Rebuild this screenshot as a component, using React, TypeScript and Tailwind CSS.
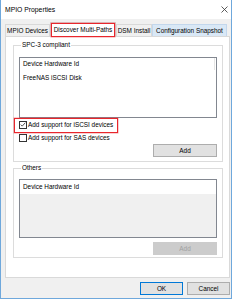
import React from "react";

function Tab({ label, w, selected, hover }: { label: string; w: string; selected?: boolean; hover?: boolean }) {
  if (selected) {
    return (
      <div className={`relative z-10 -mb-[1px] flex h-[15px] items-center justify-center bg-white border-x border-t border-[#d9d9d9] ${w}`}>
        <span className="whitespace-nowrap">{label}</span>
        <div className="absolute inset-0 border border-[#e8262c] shadow-[0_0_0_0.5px_rgba(232,38,44,0.45)]" />
      </div>
    );
  }
  return (
    <div
      className={`flex h-[12px] items-center justify-center border-t border-r border-l ${
        hover ? "bg-[#d9e8f6] border-[#c3d7ec]" : "bg-[#f0f0f0] border-[#d9d9d9]"
      } ${w}`}
    >
      <span className="whitespace-nowrap">{label}</span>
    </div>
  );
}

function CheckRow({ label, checked }: { label: string; checked?: boolean }) {
  return (
    <div className="flex h-[13px] items-center gap-[1px]">
      <div className="flex h-[8px] w-[8px] items-center justify-center border border-[#333] bg-white">
        {checked && (
          <svg width="7" height="7" viewBox="0 0 7 7">
            <path d="M0.8 3.6 L2.6 5.4 L6.2 1.4" fill="none" stroke="#222" strokeWidth="0.9" />
          </svg>
        )}
      </div>
      <span className="whitespace-nowrap">{label}</span>
    </div>
  );
}

export default function App() {
  return (
    <div className="w-[235px] h-[300px] bg-white font-['Liberation_Sans',Arial,sans-serif] text-[6.4px] leading-[8px] text-black">
      <div className="flex h-[299px] w-[232px] flex-col border-x border-b border-[#6fa8dc] bg-[#f0f0f0]">
        {/* title bar */}
        <div className="flex h-[19px] items-center justify-between bg-white pl-[4px] pr-[3px]">
          <span className="text-[6.8px]">MPIO Properties</span>
          <svg width="7" height="7" viewBox="0 0 7 7">
            <path d="M0.5 0.5 L6.5 6.5 M6.5 0.5 L0.5 6.5" stroke="#333" strokeWidth="0.8" />
          </svg>
        </div>
        {/* body */}
        <div className="flex flex-col pl-[4px] pr-[1px]">
          <div className="mt-[3px] flex h-[14px] items-end">
            <Tab label="MPIO Devices" w="w-[45px]" />
            <Tab label="Discover Multi-Paths" w="w-[66px]" selected />
            <Tab label="DSM Install" w="w-[36px]" />
            <Tab label="Configuration Snapshot" w="w-[75px]" hover />
          </div>
          <div className="flex h-[242px] flex-col border border-[#d9d9d9] bg-white pl-[7px] pr-[6px] pt-[4px]">
            {/* SPC-3 group */}
            <fieldset className="flex flex-col border border-[#dcdcdc] px-[5px] pt-[8px] pb-[4px] min-w-0">
              <legend className="ml-[2px] px-[1px] leading-[8px]">SPC-3 compliant</legend>
              <div className="flex h-[61px] flex-col border border-[#828790] bg-white">
                <div className="flex h-[13px] items-center border-b border-transparent">
                  <div className="flex h-full flex-1 items-center border-r border-[#e5e5e5] pl-[3px]">
                    Device Hardware Id
                  </div>
                  <div className="w-[1px]" />
                </div>
                <div className="flex h-[13px] items-center pl-[3px]">FreeNAS iSCSI Disk</div>
              </div>
              <div className="relative">
                <CheckRow label="Add support for iSCSI devices" checked />
                <div className="absolute left-[-5px] top-0 h-[15px] w-[104px] border border-[#e8262c] shadow-[0_0_0_0.5px_rgba(232,38,44,0.45)]" />
              </div>
              <CheckRow label="Add support for SAS devices" />
              <div className="flex justify-end">
                <div className="flex h-[13px] w-[64px] items-center justify-center border border-[#adadad] bg-[#e1e1e1]">
                  Add
                </div>
              </div>
            </fieldset>
            {/* Others group */}
            <fieldset className="mt-[2px] flex flex-col border border-[#dcdcdc] px-[5px] pt-[7px] pb-[2px] min-w-0">
              <legend className="ml-[2px] px-[1px] leading-[8px]">Others</legend>
              <div className="flex h-[59px] flex-col border border-[#828790] bg-[#f0f0f0]">
                <div className="flex h-[14px] items-center bg-white pl-[3px]">Device Hardware Id</div>
              </div>
              <div className="mt-[4px] flex justify-end">
                <div className="flex h-[13px] w-[64px] items-center justify-center border border-[#cccccc] bg-[#cccccc] text-[#a0a0a0]">
                  Add
                </div>
              </div>
            </fieldset>
          </div>
          <div className="mt-[4px] flex justify-end gap-[4px]">
            <div className="flex h-[13px] w-[43px] items-center justify-center border border-[#0078d7] bg-[#e1e1e1]">
              OK
            </div>
            <div className="flex h-[13px] w-[43px] items-center justify-center border border-[#adadad] bg-[#e1e1e1]">
              Cancel
            </div>
          </div>
        </div>
      </div>
    </div>
  );
}
